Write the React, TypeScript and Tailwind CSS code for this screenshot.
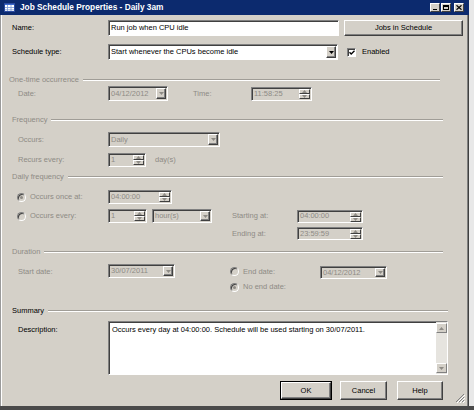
import type { ReactNode } from "react";

const DIM = "text-[#8e8b85]";

function Tri({ up, gray }: { up?: boolean; gray?: boolean }) {
  return (
    <svg width="5" height="3" viewBox="0 0 5 3">
      <path d={up ? "M0 3h5L2.5 0z" : "M0 0h5L2.5 3z"} fill={gray ? "#8e8b85" : "#000"} />
    </svg>
  );
}

function DropBtn({ gray }: { gray?: boolean }) {
  return (
    <div className="flex w-[10px] shrink-0 items-center justify-center border border-t-white border-l-white border-r-[#404040] border-b-[#404040] bg-[#d4d0c8] shadow-[inset_-1px_-1px_0_#808080]">
      <Tri gray={gray} />
    </div>
  );
}

function SpinBtn() {
  return (
    <div className="flex w-[11px] shrink-0 flex-col">
      <div className="flex flex-1 items-center justify-center border border-t-white border-l-white border-r-[#404040] border-b-[#404040] bg-[#d4d0c8]">
        <Tri up gray />
      </div>
      <div className="flex flex-1 items-center justify-center border border-t-white border-l-white border-r-[#404040] border-b-[#404040] bg-[#d4d0c8]">
        <Tri gray />
      </div>
    </div>
  );
}

function Field({ w, value, disabled, kind }: { w: string; value: string; disabled?: boolean; kind?: "drop" | "spin" }) {
  return (
    <div
      className={`flex h-full shrink-0 ${w} border border-t-[#808080] border-l-[#808080] border-r-white border-b-white py-[1px] pr-[1px] pl-[2px] shadow-[inset_1px_1px_0_#404040] ${
        disabled ? "bg-[#d4d0c8] text-[#8e8b85]" : "bg-white text-black"
      }`}
    >
      <span className="flex flex-1 items-center whitespace-nowrap leading-none">{value}</span>
      {kind === "drop" && <DropBtn gray={disabled} />}
      {kind === "spin" && <SpinBtn />}
    </div>
  );
}

function Radio({ on }: { on?: boolean }) {
  return (
    <div className="flex h-[9px] w-[9px] shrink-0 items-center justify-center rounded-full border border-t-[#808080] border-l-[#808080] border-r-white border-b-white bg-[#d4d0c8] shadow-[inset_1px_1px_0_#404040]">
      {on && <div className="h-[3px] w-[3px] rounded-full bg-[#8e8b85]" />}
    </div>
  );
}

function Group({ title, dim, width, left, className }: { title: string; dim?: boolean; width: string; left: string; className: string }) {
  return (
    <div className={`flex h-[12px] items-center ${width} ${left} ${className}`}>
      <span className={`whitespace-nowrap leading-none ${dim ? DIM : "text-black"}`}>{title}</span>
      <div className="ml-[4px] h-[2px] flex-1 border-t border-t-[#a09d97] border-b border-b-white" />
    </div>
  );
}

function Button({ children, w, def }: { children: ReactNode; w: string; def?: boolean }) {
  return (
    <div
      className={`flex h-full ${w} items-center justify-center bg-[#d4d0c8] ${
        def ? "border border-black" : ""
      }`}
    >
      <div className="flex h-full w-full items-center justify-center border border-t-white border-l-white border-r-[#404040] border-b-[#404040] shadow-[inset_-1px_-1px_0_#808080]">
        {children}
      </div>
    </div>
  );
}

function Label({ children, dim, w, left }: { children: ReactNode; dim?: boolean; w: string; left?: string }) {
  return <span className={`shrink-0 whitespace-nowrap leading-none ${w} ${left ?? ""} ${dim ? DIM : "text-black"}`}>{children}</span>;
}

export default function App() {
  return (
    <div className="relative h-[410px] w-[474px] overflow-hidden bg-[#f0f0f0] font-['Liberation_Sans',Arial,sans-serif] text-[7.5px]">
      <div className="relative flex h-[406px] w-[469px] flex-col bg-[#d4d0c8] shadow-[inset_1px_0_0_#9a9a9a,inset_2px_0_0_#ffffff,inset_-1px_0_0_#404040,inset_-2px_0_0_#808080]">
        {/* title bar */}
        <div className="flex h-[15px] items-center bg-[#0c2a6e] pr-[5px] pl-[4px]">
          <svg width="11" height="9" viewBox="0 0 11 9">
            <rect x="0" y="0" width="11" height="9" fill="#fff" />
            <rect x="0" y="0" width="11" height="2" fill="#3a6ad0" />
            <path d="M0 4.5h11M0 6.8h11M3.5 2v7M7 2v7" stroke="#7a9ad8" strokeWidth="0.8" />
            <rect x="0.5" y="0.5" width="10" height="8" fill="none" stroke="#2a4aa0" strokeWidth="1" />
          </svg>
          <span className="ml-[5px] text-[8.3px] font-bold leading-none text-white">Job Schedule Properties - Daily 3am</span>
          <div className="ml-auto flex items-center gap-[1px]">
            {["min", "max"].map((k) => (
              <div key={k} className="flex h-[9px] w-[10px] items-center justify-center border border-t-white border-l-white border-r-[#404040] border-b-[#404040] bg-[#d4d0c8]">
                {k === "min" ? (
                  <div className="mt-[4px] h-[1.5px] w-[4px] bg-black" />
                ) : (
                  <div className="h-[5px] w-[6px] border border-t-2 border-black" />
                )}
              </div>
            ))}
            <div className="ml-[2px] flex h-[9px] w-[10px] items-center justify-center border border-t-white border-l-white border-r-[#404040] border-b-[#404040] bg-[#d4d0c8]">
              <svg width="6" height="5" viewBox="0 0 6 5">
                <path d="M0.5 0.3L5.5 4.7M5.5 0.3L0.5 4.7" stroke="#000" strokeWidth="1.2" />
              </svg>
            </div>
          </div>
        </div>

        {/* name */}
        <div className="mt-[5px] flex h-[16px] items-center">
          <Label w="w-[96px]" left="ml-[12px]">Name:</Label>
          <Field w="w-[231px]" value="Run job when CPU idle" />
          <div className="ml-[5px] h-full">
            <Button w="w-[119px]">Jobs in Schedule</Button>
          </div>
        </div>

        {/* schedule type */}
        <div className="mt-[8px] flex h-[16px] items-center">
          <Label w="w-[96px]" left="ml-[12px]">Schedule type:</Label>
          <Field w="w-[230px]" value="Start whenever the CPUs become idle" kind="drop" />
          <div className="ml-[9px] flex h-[9px] w-[9px] items-center justify-center border border-t-[#808080] border-l-[#808080] border-r-white border-b-white bg-white shadow-[inset_1px_1px_0_#404040]">
            <svg width="6" height="5" viewBox="0 0 6 5">
              <path d="M0.5 2.2L2.2 4L5.5 0.7" stroke="#000" strokeWidth="1.3" fill="none" />
            </svg>
          </div>
          <span className="ml-[6px] leading-none">Enabled</span>
        </div>

        <Group title="One-time occurrence" dim width="w-[431px]" left="ml-[9px]" className="mt-[14px]" />

        {/* date / time */}
        <div className="flex h-[15px] items-center">
          <Label dim w="w-[90px]" left="ml-[18px]">Date:</Label>
          <Field w="w-[60px]" value="04/12/2012" disabled kind="drop" />
          <Label dim w="w-[58px]" left="ml-[25px]">Time:</Label>
          <div className="h-[14px]">
            <Field w="w-[61px]" value="11:58:25" disabled kind="spin" />
          </div>
        </div>

        <Group title="Frequency" dim width="w-[431px]" left="ml-[12px]" className="mt-[13px]" />

        <div className="mt-[6px] flex h-[15px] items-center">
          <Label dim w="w-[90px]" left="ml-[18px]">Occurs:</Label>
          <Field w="w-[112px]" value="Daily" disabled kind="drop" />
        </div>

        <div className="mt-[6px] flex h-[14px] items-center">
          <Label dim w="w-[90px]" left="ml-[18px]">Recurs every:</Label>
          <Field w="w-[38px]" value="1" disabled kind="spin" />
          <Label dim w="w-[40px]" left="ml-[9px]">day(s)</Label>
        </div>

        <Group title="Daily frequency" dim width="w-[431px]" left="ml-[12px]" className="mt-[4px]" />

        <div className="mt-[7px] flex h-[14px] items-center">
          <div className="ml-[17px] flex w-[91px] shrink-0 items-center">
            <Radio on />
            <span className={`ml-[4px] leading-none ${DIM}`}>Occurs once at:</span>
          </div>
          <Field w="w-[64px]" value="04:00:00" disabled kind="spin" />
        </div>

        <div className="mt-[5px] flex h-[14px] items-center">
          <div className="ml-[17px] flex w-[91px] shrink-0 items-center">
            <Radio />
            <span className={`ml-[4px] leading-none ${DIM}`}>Occurs every:</span>
          </div>
          <Field w="w-[39px]" value="1" disabled kind="spin" />
          <div className="ml-[5px] h-full">
            <Field w="w-[60px]" value="hour(s)" disabled kind="drop" />
          </div>
          <Label dim w="w-[65px]" left="ml-[20px]">Starting at:</Label>
          <div className="h-[13px]">
            <Field w="w-[66px]" value="04:00:00" disabled kind="spin" />
          </div>
        </div>

        <div className="mt-[4px] flex h-[13px] items-center">
          <Label dim w="w-[65px]" left="ml-[232px]">Ending at:</Label>
          <Field w="w-[66px]" value="23:59:59" disabled kind="spin" />
        </div>

        <Group title="Duration" dim width="w-[431px]" left="ml-[12px]" className="mt-[6px]" />

        <div className="mt-[6px] flex h-[15px] items-center">
          <Label dim w="w-[90px]" left="ml-[18px]">Start date:</Label>
          <div className="h-[14px] self-start">
            <Field w="w-[67px]" value="30/07/2011" disabled kind="drop" />
          </div>
          <div className="ml-[55px] flex w-[90px] shrink-0 items-center">
            <Radio />
            <span className={`ml-[4px] leading-none ${DIM}`}>End date:</span>
          </div>
          <div className="h-[13px] self-end">
            <Field w="w-[67px]" value="04/12/2012" disabled kind="drop" />
          </div>
        </div>

        <div className="mt-[2px] flex h-[12px] items-center">
          <div className="ml-[230px] flex items-center">
            <Radio on />
            <span className={`ml-[4px] leading-none ${DIM}`}>No end date:</span>
          </div>
        </div>

        <Group title="Summary" width="w-[436px]" left="ml-[12px]" className="mt-[12px]" />

        <div className="mt-[4px] flex h-[54px]">
          <Label w="w-[90px]" left="ml-[18px] pt-[5px]">Description:</Label>
          <div className="flex h-full w-[340px] border border-t-[#808080] border-l-[#808080] border-r-white border-b-white bg-white shadow-[inset_1px_1px_0_#404040]">
            <span className="flex-1 pt-[4px] pl-[3px] leading-none whitespace-nowrap">
              Occurs every day at 04:00:00. Schedule will be used starting on 30/07/2011.
            </span>
            <div className="flex w-[11px] flex-col bg-[#e6e4df] pt-[1px] pb-[1px]">
              <div className="flex h-[10px] items-center justify-center border border-t-white border-l-white border-r-[#808080] border-b-[#808080] bg-[#d4d0c8]">
                <Tri up gray />
              </div>
              <div className="flex-1" />
              <div className="flex h-[10px] items-center justify-center border border-t-white border-l-white border-r-[#808080] border-b-[#808080] bg-[#d4d0c8]">
                <Tri gray />
              </div>
            </div>
          </div>
        </div>

        <div className="mt-[6px] flex h-[19px] items-center">
          <div className="ml-[280px] h-full">
            <Button w="w-[52px]" def>OK</Button>
          </div>
          <div className="ml-[8px] h-full">
            <Button w="w-[47px]">Cancel</Button>
          </div>
          <div className="ml-[10px] h-full">
            <Button w="w-[46px]">Help</Button>
          </div>
        </div>

        {/* resize grip */}
        <svg className="absolute right-[4px] bottom-[3px]" width="10" height="10" viewBox="0 0 10 10">
          <path d="M9 1L1 9M9 4L4 9M9 7L7 9" stroke="#808080" strokeWidth="1" />
          <path d="M10 2L2 10M10 5L5 10M10 8L8 10" stroke="#fff" strokeWidth="1" />
        </svg>
      </div>
      <div className="h-[4px] w-full bg-[#4a4a4a]" />
      <div className="absolute top-[0px] right-[0px] h-[406px] w-[5px] bg-[#e8e8e8]" />
    </div>
  );
}
